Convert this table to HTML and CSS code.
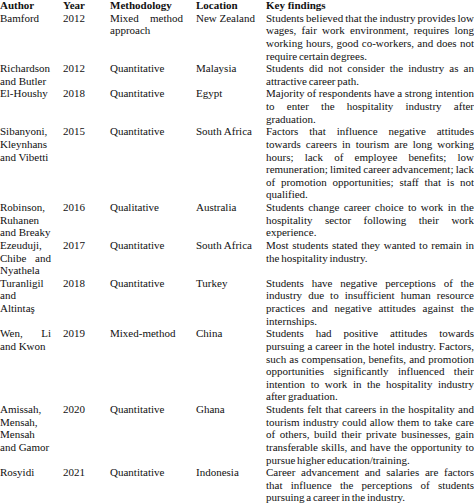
FILE: index.html
```html
<!DOCTYPE html>
<html>
<head>
<meta charset="utf-8">
<link rel="stylesheet" href="styles.css">
</head>
<body>
<div class="tbl">
  <div class="c au h">Author</div><div class="c yr h">Year</div><div class="c me h">Methodology</div><div class="c lo h">Location</div><div class="c kf h">Key findings</div>

  <div class="c au">Bamford</div><div class="c yr">2012</div><div class="c me">Mixed method approach</div><div class="c lo">New Zealand</div>
  <div class="c kf"><span class="ln">Students believed that the industry provides low</span><span class="ln">wages, fair work environment, requires long</span><span class="ln">working hours, good co-workers, and does not</span><span class="ll">require certain degrees.</span></div>

  <div class="c au">Richardson and Butler</div><div class="c yr">2012</div><div class="c me">Quantitative</div><div class="c lo">Malaysia</div>
  <div class="c kf"><span class="ln">Students did not consider the industry as an</span><span class="ll">attractive career path.</span></div>

  <div class="c au">El-Houshy</div><div class="c yr">2018</div><div class="c me">Quantitative</div><div class="c lo">Egypt</div>
  <div class="c kf"><span class="ln">Majority of respondents have a strong intention</span><span class="ln">to enter the hospitality industry after</span><span class="ll">graduation.</span></div>

  <div class="c au">Sibanyoni, Kleynhans and Vibetti</div><div class="c yr">2015</div><div class="c me">Quantitative</div><div class="c lo">South Africa</div>
  <div class="c kf"><span class="ln">Factors that influence negative attitudes</span><span class="ln">towards careers in tourism are long working</span><span class="ln">hours; lack of employee benefits; low</span><span class="ln">remuneration; limited career advancement; lack</span><span class="ln">of promotion opportunities; staff that is not</span><span class="ll">qualified.</span></div>

  <div class="c au">Robinson, Ruhanen and Breaky</div><div class="c yr">2016</div><div class="c me">Qualitative</div><div class="c lo">Australia</div>
  <div class="c kf"><span class="ln">Students change career choice to work in the</span><span class="ln">hospitality sector following their work</span><span class="ll">experience.</span></div>

  <div class="c au">Ezeuduji, Chibe and Nyathela</div><div class="c yr">2017</div><div class="c me">Quantitative</div><div class="c lo">South Africa</div>
  <div class="c kf"><span class="ln">Most students stated they wanted to remain in</span><span class="ll">the hospitality industry.</span></div>

  <div class="c au">Turanligil and Altintaş</div><div class="c yr">2018</div><div class="c me">Quantitative</div><div class="c lo">Turkey</div>
  <div class="c kf"><span class="ln">Students have negative perceptions of the</span><span class="ln">industry due to insufficient human resource</span><span class="ln">practices and negative attitudes against the</span><span class="ll">internships.</span></div>

  <div class="c au">Wen, Li and Kwon</div><div class="c yr">2019</div><div class="c me">Mixed-method</div><div class="c lo">China</div>
  <div class="c kf"><span class="ln">Students had positive attitudes towards</span><span class="ln">pursuing a career in the hotel industry. Factors,</span><span class="ln">such as compensation, benefits, and promotion</span><span class="ln">opportunities significantly influenced their</span><span class="ln">intention to work in the hospitality industry</span><span class="ll">after graduation.</span></div>

  <div class="c au">Amissah, Mensah, Mensah and Gamor</div><div class="c yr">2020</div><div class="c me">Quantitative</div><div class="c lo">Ghana</div>
  <div class="c kf"><span class="ln">Students felt that careers in the hospitality and</span><span class="ln">tourism industry could allow them to take care</span><span class="ln">of others, build their private businesses, gain</span><span class="ln">transferable skills, and have the opportunity to</span><span class="ll">pursue higher education/training.</span></div>

  <div class="c au">Rosyidi</div><div class="c yr">2021</div><div class="c me">Quantitative</div><div class="c lo">Indonesia</div>
  <div class="c kf"><span class="ln">Career advancement and salaries are factors</span><span class="ln">that influence the perceptions of students</span><span class="ll">pursuing a career in the industry.</span></div>
</div>
</body>
</html>
```

FILE: styles.css
```css
html, body {
  margin: 0;
  padding: 0;
  background: #fff;
  overflow: hidden;
}
body {
  width: 474px;
  height: 504px;
}
.tbl {
  display: grid;
  grid-template-columns: 63px 47px 86px 70px 208px;
  width: 474px;
  margin-top: -1px;
  font-family: "Liberation Serif", "Times New Roman", serif;
  font-size: 11px;
  line-height: 12.62px;
  color: #111;
}
.c {
  text-align: justify;
}
.au { padding-right: 12px; }
.me { padding-right: 13px; }
.lo { padding-right: 4px; }
.h { font-weight: bold; }
.kf .ln,
.kf .ll {
  word-spacing: -1px;
}
.ln {
  display: block;
  white-space: nowrap;
  text-align: justify;
  text-align-last: justify;
}
.ll {
  display: block;
  white-space: nowrap;
  text-align: left;
}
```
